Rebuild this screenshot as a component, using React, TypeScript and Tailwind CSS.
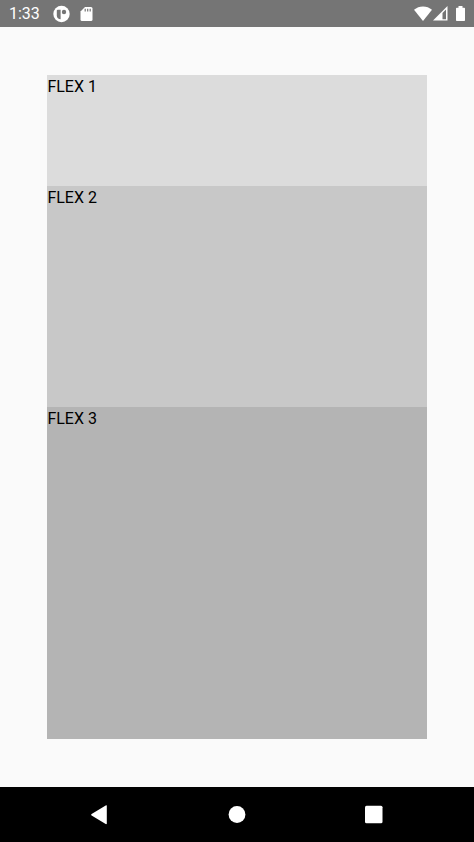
import type { ReactNode } from "react";

const StatusBar = () => (
  <header className="flex h-[27px] shrink-0 items-center bg-[#757575] pl-[9px] pr-2 pt-px text-white">
    <span className="text-base leading-[26px]">1:33</span>

    <svg className="ml-3 size-[18px]" viewBox="0 0 18 18" aria-hidden="true">
      <circle cx="9.5" cy="9" r="8.2" fill="#fff" />
      <path d="M4.800 5.800a1 1 0 0 1 1-1h2.800v9.400c-2 0-3.800-1.400-3.800-3.400z" fill="#757575" />
      <circle cx="12" cy="7" r="2.200" fill="#757575" />
    </svg>

    <svg className="ml-2 h-[18px] w-4" viewBox="0 0 16 18" aria-hidden="true">
      <path
        d="M7 2h6a1.500 1.500 0 0 1 1.500 1.500v11A1.500 1.500 0 0 1 13 16H4a1.500 1.500 0 0 1-1.500-1.500v-8z"
        fill="#fff"
      />
      <path d="M7.200 3.800v2.800M9.700 3.800v2.800M12.200 3.800v2.800" stroke="#757575" strokeWidth="1.200" />
    </svg>

    <svg className="ml-auto h-[18px] w-[18px]" viewBox="0 0 18 18" aria-hidden="true">
      <path d="M0 4.800a13.800 13.800 0 0 1 18 0L9 16z" fill="#fff" />
    </svg>

    <svg className="h-[18px] w-4" viewBox="0 0 16 18" aria-hidden="true">
      <path d="M15.500 1v14.500H1z" fill="#fff" />
      <path d="M10.500 8 14 4.500v9.800h-3.500z" fill="#757575" />
    </svg>

    <svg className="ml-[7px] h-[18px] w-[11px]" viewBox="0 0 11 18" aria-hidden="true">
      <path
        d="M3.500 1h4v1.700h1.700a.8.8 0 0 1 .8.8v11.700a.8.8 0 0 1-.8.8H1.800a.8.8 0 0 1-.8-.8V3.500a.8.8 0 0 1 .8-.8h1.700z"
        fill="#fff"
      />
    </svg>
  </header>
);

interface NavButtonProps {
  label: string;
  children: ReactNode;
}

const NavButton = ({ label, children }: NavButtonProps) => (
  <button type="button" aria-label={label} className="flex size-10 items-center justify-center">
    <svg className="size-5" viewBox="0 0 20 20" fill="#fff" aria-hidden="true">
      {children}
    </svg>
  </button>
);

const NavigationBar = () => (
  <nav className="flex h-[55px] shrink-0 items-center justify-center gap-[97px] bg-black">
    <NavButton label="Back">
      <path d="M16.800 1v17.400a.7.7 0 0 1-1.100.6L1.600 10.400a.8.8 0 0 1 0-1.400L15.700.4a.7.7 0 0 1 1.100.6z" />
    </NavButton>
    <NavButton label="Home">
      <circle cx="10" cy="9.500" r="8.400" />
    </NavButton>
    <NavButton label="Recent apps">
      <rect x="1" y="0.700" width="17.500" height="17.500" rx="1.500" />
    </NavButton>
  </nav>
);

export default function App() {
  return (
    <div className="flex min-h-screen flex-col bg-[#fafafa] font-['Roboto',sans-serif]">
      <StatusBar />
      <main className="flex flex-1 flex-col px-[10%] py-12 text-base leading-6 text-black">
        <div className="grow basis-0 bg-[#dcdcdc]">FLEX 1</div>
        <div className="grow-2 basis-0 bg-[#c8c8c8]">FLEX 2</div>
        <div className="grow-3 basis-0 bg-[#b4b4b4]">FLEX 3</div>
      </main>
      <NavigationBar />
    </div>
  );
}
